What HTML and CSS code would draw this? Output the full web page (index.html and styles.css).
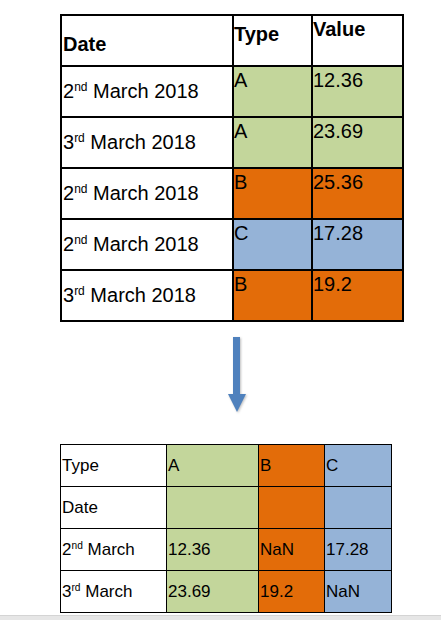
FILE: index.html
```html
<!DOCTYPE html>
<html>
<head>
    <meta charset="utf-8">
    <link rel="stylesheet" href="styles.css">
</head>
<body>
    <div class="page">
        <table class="long-table">
            <tr class="head-row">
                <th class="col-date head-date">Date</th>
                <th class="col-type head-type">Type</th>
                <th class="col-value head-value">Value</th>
            </tr>
            <tr>
                <td class="col-date">2<sup>nd</sup> March 2018</td>
                <td class="green">A</td>
                <td class="green">12.36</td>
            </tr>
            <tr>
                <td class="col-date">3<sup>rd</sup> March 2018</td>
                <td class="green">A</td>
                <td class="green">23.69</td>
            </tr>
            <tr>
                <td class="col-date">2<sup>nd</sup> March 2018</td>
                <td class="orange">B</td>
                <td class="orange">25.36</td>
            </tr>
            <tr>
                <td class="col-date">2<sup>nd</sup> March 2018</td>
                <td class="blue">C</td>
                <td class="blue">17.28</td>
            </tr>
            <tr>
                <td class="col-date">3<sup>rd</sup> March 2018</td>
                <td class="orange">B</td>
                <td class="orange">19.2</td>
            </tr>
        </table>

        <div class="arrow">
            <svg width="20" height="76" viewBox="0 0 20 76">
                <rect x="6" y="0" width="7" height="58" fill="#4f81bd"/>
                <polygon points="1,57 19,57 10,75" fill="#4f81bd"/>
            </svg>
        </div>

        <table class="wide-table">
            <tr>
                <td class="label">Type</td>
                <td class="green col-a">A</td>
                <td class="orange col-b">B</td>
                <td class="blue col-c">C</td>
            </tr>
            <tr>
                <td class="label">Date</td>
                <td class="green"></td>
                <td class="orange"></td>
                <td class="blue"></td>
            </tr>
            <tr>
                <td class="label">2<sup>nd</sup> March</td>
                <td class="green">12.36</td>
                <td class="orange">NaN</td>
                <td class="blue">17.28</td>
            </tr>
            <tr>
                <td class="label">3<sup>rd</sup> March</td>
                <td class="green">23.69</td>
                <td class="orange">19.2</td>
                <td class="blue">NaN</td>
            </tr>
        </table>
    </div>
    <div class="page-edge"></div>
</body>
</html>
```
FILE: styles.css
```css
body {
    margin: 0;
    background: #fff;
    color: #000;
    font-family: "Liberation Sans", Arial, sans-serif;
    height: 620px;
    overflow: hidden;
    position: relative;
}
.page {
    padding: 14px 0 0 60px;
}
table {
    border-collapse: collapse;
}
sup {
    font-size: 0.6em;
    line-height: 0;
    vertical-align: 0.6em;
}

/* first table: long format */
.long-table {
    font-size: 20px;
}
.long-table tr {
    height: 51px;
}
.long-table th,
.long-table td {
    border: 2px solid #000;
    padding: 0;
    text-align: left;
}
.long-table th {
    font-weight: bold;
}
.col-date {
    width: 169px;
    padding-left: 1px !important;
    vertical-align: middle;
}
.col-type {
    width: 77px;
}
.col-value {
    width: 89px;
}
.head-date {
    vertical-align: bottom;
    padding-bottom: 9px !important;
}
.head-type {
    vertical-align: top;
    padding-top: 7px !important;
}
.head-value {
    vertical-align: top;
    padding-top: 2px !important;
}
.long-table td.green,
.long-table td.orange,
.long-table td.blue {
    vertical-align: top;
    padding-top: 2px;
}

.green { background: #c3d69b; }
.orange { background: #e36c09; }
.blue { background: #95b3d7; }

.arrow {
    padding: 15px 0 0 167px;
    height: 122px;
    box-sizing: border-box;
}
.arrow svg {
    display: block;
    filter: drop-shadow(1px 1px 1px rgba(0, 0, 0, 0.25));
}

/* second table: pivoted */
.wide-table {
    font-size: 17px;
}
.wide-table tr {
    height: 42px;
}
.wide-table td {
    border: 1.5px solid #000;
    padding: 0 0 0 1px;
    vertical-align: middle;
}
.wide-table .label {
    width: 104px;
}
.wide-table .col-a {
    width: 90px;
}
.wide-table .col-b {
    width: 64px;
}
.wide-table .col-c {
    width: 65px;
}

.page-edge {
    position: absolute;
    left: 0;
    right: 0;
    bottom: 0;
    height: 4px;
    background: #e6e6e6;
    border-top: 1px solid #d4d4d4;
}
```
